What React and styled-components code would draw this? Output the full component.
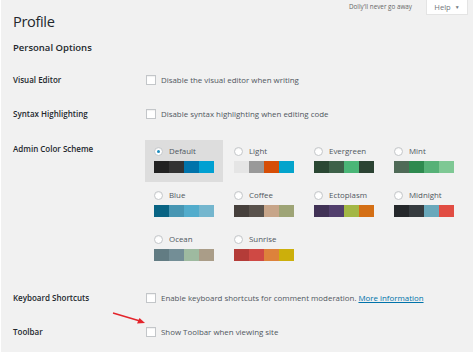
import React from "react";
import styled, { createGlobalStyle } from "styled-components";

const GlobalStyle = createGlobalStyle`
  html, body { margin: 0; padding: 0; background: #fff; }
  body { font-family: "Open Sans", "Noto Sans", sans-serif; }
  * { box-sizing: border-box; }
`;

const Page = styled.div`
  position: relative;
  width: 472px;
  height: 352px;
  margin-left: 1px;
  background: #f1f1f1;
  overflow: hidden;
  color: #23282d;
`;

const TopBar = styled.div`
  display: flex;
  justify-content: flex-end;
  align-items: flex-start;
  height: 15px;
  padding-right: 5px;
`;

const Dolly = styled.span`
  font-size: 6.3px;
  line-height: 14px;
  color: #666;
  margin-right: 14px;
`;

const HelpTab = styled.div`
  width: 42px;
  height: 15px;
  background: #fff;
  border: 1px solid #e4e4e4;
  border-top: none;
  display: flex;
  align-items: center;
  justify-content: center;
  gap: 4px;
  font-size: 7.6px;
  color: #72777c;
`;

const Caret = styled.span`
  font-size: 5px;
  color: #72777c;
`;

const Content = styled.div`
  padding-left: 12px;
`;

const Title = styled.h1`
  margin: -4.5px 0 0;
  font-size: 14.6px;
  line-height: 20px;
  letter-spacing: -0.35px;
  font-weight: 400;
  color: #23282d;
`;

const SectionTitle = styled.h2`
  margin: 10px 0 8.5px;
  font-size: 9.5px;
  line-height: 14px;
  font-weight: 600;
  color: #23282d;
`;

const Row = styled.div`
  display: grid;
  grid-template-columns: 133px 1fr;
  align-items: ${(p) => (p.$top ? "start" : "center")};
  height: ${(p) => p.$h || 34}px;
`;

const Label = styled.div`
  font-size: 8px;
  line-height: 12px;
  font-weight: 600;
  color: #23282d;
  padding-top: ${(p) => p.$pt || 0}px;
`;

const Field = styled.label`
  display: flex;
  align-items: center;
  gap: 5px;
  font-size: 7.9px;
  line-height: 12px;
  color: #50575e;
`;

const Checkbox = styled.span`
  width: 10px;
  height: 10px;
  flex: none;
  background: #fff;
  border: 1px solid #c3c6c9;
  box-shadow: inset 0 1px 1px rgba(0, 0, 0, 0.06);
`;

const Link = styled.a`
  color: #0073aa;
  text-decoration: underline;
  margin-left: 2px;
`;

const SchemeGrid = styled.div`
  display: grid;
  grid-template-columns: repeat(4, 78px);
  grid-auto-rows: 42px;
  column-gap: 2px;
  row-gap: 2px;
  margin-top: 9px;
  margin-left: -1px;
`;

const Scheme = styled.div`
  padding: 6px 9px 0;
  background: ${(p) => (p.$selected ? "#dddddd" : "transparent")};
`;

const SchemeLabel = styled.div`
  display: flex;
  align-items: center;
  gap: 6px;
  height: 10px;
  font-size: 7.9px;
  color: #50575e;
`;

const Radio = styled.span`
  width: 9px;
  height: 9px;
  flex: none;
  border-radius: 50%;
  background: #fff;
  border: 1px solid #c3c6c9;
  box-shadow: inset 0 1px 1px rgba(0, 0, 0, 0.06);
  display: flex;
  align-items: center;
  justify-content: center;
  &::after {
    content: "";
    display: ${(p) => (p.$checked ? "block" : "none")};
    width: 3px;
    height: 3px;
    border-radius: 50%;
    background: #1e8cbe;
  }
`;

const Swatches = styled.div`
  display: flex;
  margin-top: 5px;
  height: 12px;
`;

const Swatch = styled.span`
  width: 15px;
  height: 12px;
  background: ${(p) => p.$c};
`;

const Arrow = styled.svg`
  position: absolute;
  left: 108px;
  top: 308px;
`;

const schemes = [
  { name: "Default", colors: ["#222", "#333", "#0073aa", "#00a0d2"], selected: true },
  { name: "Light", colors: ["#e5e5e5", "#999", "#d64e07", "#04a4cc"] },
  { name: "Evergreen", colors: ["#2a4733", "#3d6149", "#4ab677", "#2c4333"] },
  { name: "Mint", colors: ["#4f6a57", "#2e8a4f", "#56b177", "#7ec894"] },
  { name: "Blue", colors: ["#096484", "#4796b3", "#52accc", "#74b6ce"] },
  { name: "Coffee", colors: ["#46403c", "#59524c", "#c7a589", "#9ea476"] },
  { name: "Ectoplasm", colors: ["#413256", "#523f6d", "#a3b745", "#d46f15"] },
  { name: "Midnight", colors: ["#25282b", "#363b3f", "#69a8bb", "#e14d43"] },
  { name: "Ocean", colors: ["#627c83", "#738e96", "#9ebaa0", "#aa9d88"] },
  { name: "Sunrise", colors: ["#b43c38", "#cf4944", "#dd823b", "#ccaf0b"] },
];

export default function App() {
  return (
    <>
      <GlobalStyle />
      <Page>
        <TopBar>
          <Dolly>Dolly'll never go away</Dolly>
          <HelpTab>
            Help <Caret>▼</Caret>
          </HelpTab>
        </TopBar>
        <Content>
          <Title>Profile</Title>
          <SectionTitle>Personal Options</SectionTitle>

          <Row>
            <Label>Visual Editor</Label>
            <Field>
              <Checkbox />
              Disable the visual editor when writing
            </Field>
          </Row>

          <Row>
            <Label>Syntax Highlighting</Label>
            <Field>
              <Checkbox />
              Disable syntax highlighting when editing code
            </Field>
          </Row>

          <Row $top $h={150}>
            <Label $pt={12}>Admin Color Scheme</Label>
            <SchemeGrid>
              {schemes.map((s) => (
                <Scheme key={s.name} $selected={s.selected}>
                  <SchemeLabel>
                    <Radio $checked={s.selected} />
                    {s.name}
                  </SchemeLabel>
                  <Swatches>
                    {s.colors.map((c, i) => (
                      <Swatch key={i} $c={c} />
                    ))}
                  </Swatches>
                </Scheme>
              ))}
            </SchemeGrid>
          </Row>

          <Row>
            <Label>Keyboard Shortcuts</Label>
            <Field>
              <Checkbox />
              <span>
                Enable keyboard shortcuts for comment moderation.
                <Link>More information</Link>
              </span>
            </Field>
          </Row>

          <Row>
            <Label>Toolbar</Label>
            <Field>
              <Checkbox />
              Show Toolbar when viewing site
            </Field>
          </Row>
        </Content>

        <Arrow width="40" height="20" viewBox="0 0 40 20">
          <line x1="4" y1="5" x2="31" y2="13" stroke="#e3242b" strokeWidth="1.4" />
          <polygon points="36,15 28,15.5 30.5,10" fill="#e3242b" />
        </Arrow>
      </Page>
    </>
  );
}
